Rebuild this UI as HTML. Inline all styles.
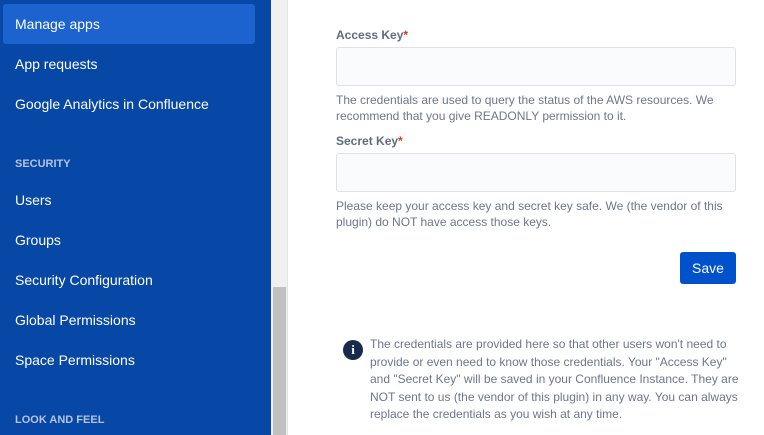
<!DOCTYPE html><html><head><style>
body{margin:0;width:764px;height:435px;overflow:hidden;font-family:"Liberation Sans",sans-serif;background:#fff;position:relative}
.sb{position:absolute;left:0;top:0;width:271px;height:435px;background:#0747a6;color:#fff}
.it{position:absolute;left:15px;font-size:14px}
.hd{position:absolute;left:15px;font-size:11px;font-weight:bold;color:#b3c3e0}
.sel{position:absolute;left:3px;top:4px;width:252px;height:40px;background:#1c63cf;border-radius:3px}
.trk{position:absolute;left:271px;top:0;width:16px;height:435px;background:#f0f0f0;border-right:1px solid #e4e4e4}
.th{position:absolute;left:273px;top:287px;width:13px;height:148px;background:#c1c1c1}
.lbl{position:absolute;left:336px;font-size:12px;font-weight:bold;color:#5e6c84}
.lbl span{color:#de350b}
.inp{position:absolute;left:336px;width:398px;height:37px;border:1px solid #dfe1e6;background:#fafbfc;border-radius:3px}
.hp{position:absolute;left:336px;font-size:12px;color:#6b778c;line-height:16px;width:400px}
.btn{position:absolute;left:680px;top:252px;width:56px;height:32px;background:#0052cc;color:#fff;border-radius:3px;font-size:14px;text-align:center;line-height:32px}
.info{position:absolute;left:370px;top:336px;font-size:12px;color:#6b778c;line-height:17.5px;width:374px}
.ic{position:absolute;left:343px;top:340px;width:20px;height:20px;border-radius:50%;background:#172b4d;color:#fff;font-weight:bold;font-size:13px;text-align:center;line-height:20px;font-family:"Liberation Serif",serif}
</style></head><body>
<div class="sb">
<div class="sel"></div>
<div class="it" style="top:16px">Manage apps</div>
<div class="it" style="top:56px">App requests</div>
<div class="it" style="top:96px">Google Analytics in Confluence</div>
<div class="hd" style="top:158px">SECURITY</div>
<div class="it" style="top:192px">Users</div>
<div class="it" style="top:232px">Groups</div>
<div class="it" style="top:272px">Security Configuration</div>
<div class="it" style="top:312px">Global Permissions</div>
<div class="it" style="top:352px">Space Permissions</div>
<div class="hd" style="top:414px">LOOK AND FEEL</div>
</div>
<div class="trk"></div><div class="th"></div>
<div class="lbl" style="top:28px">Access Key<span>*</span></div>
<div class="inp" style="top:47px"></div>
<div class="hp" style="top:92px">The credentials are used to query the status of the AWS resources. We recommend that you give READONLY permission to it.</div>
<div class="lbl" style="top:134px">Secret Key<span>*</span></div>
<div class="inp" style="top:153px"></div>
<div class="hp" style="top:198px">Please keep your access key and secret key safe. We (the vendor of this plugin) do NOT have access those keys.</div>
<div class="btn">Save</div>
<div class="ic">i</div>
<div class="info">The credentials are provided here so that other users won't need to provide or even need to know those credentials. Your "Access Key" and "Secret Key" will be saved in your Confluence Instance. They are NOT sent to us (the vendor of this plugin) in any way. You can always replace the credentials as you wish at any time.</div>
</body></html>
